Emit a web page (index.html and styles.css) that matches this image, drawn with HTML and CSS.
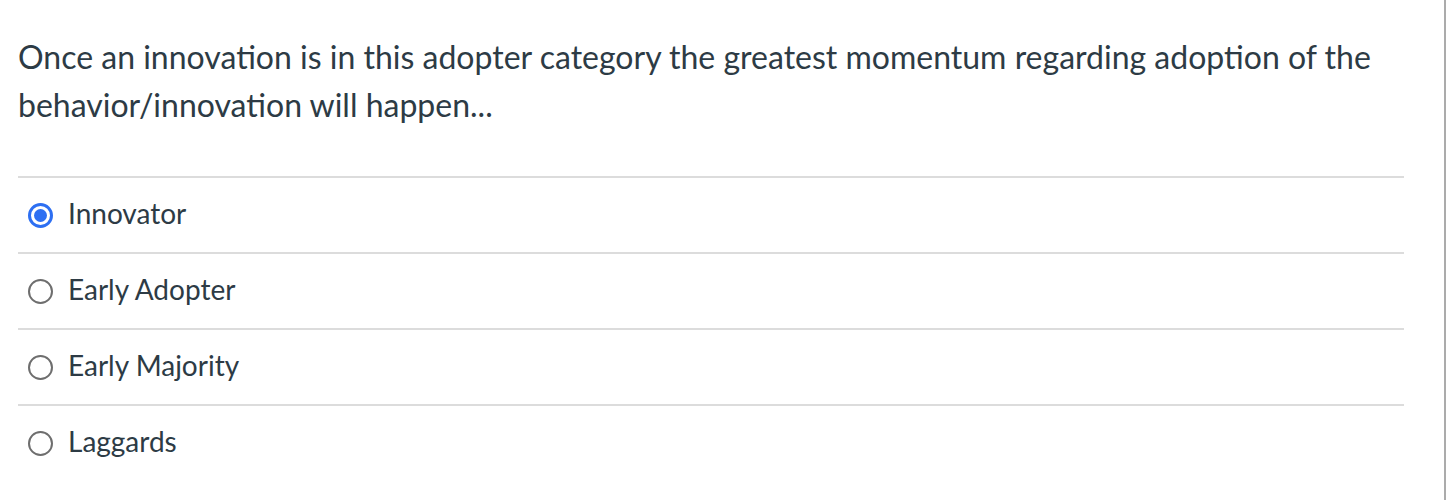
FILE: index.html
```html
<!DOCTYPE html>
<html>
<head>
<meta charset="utf-8">
<link rel="stylesheet" href="styles.css">
</head>
<body>
<div class="page">
  <div class="content">
    <div class="question">Once an innovation is in this adopter category the greatest momentum regarding adoption of the behavior/innovation will happen...</div>
    <div class="answers">
      <label class="answer"><span class="radio checked"></span><span class="label">Innovator</span></label>
      <label class="answer"><span class="radio"></span><span class="label">Early Adopter</span></label>
      <label class="answer"><span class="radio"></span><span class="label">Early Majority</span></label>
      <label class="answer"><span class="radio"></span><span class="label">Laggards</span></label>
    </div>
  </div>
  <div class="edge"></div>
</div>
</body>
</html>
```
FILE: styles.css
```css
html, body {
  margin: 0;
  padding: 0;
  background: #fff;
}
body {
  font-family: Lato, "Open Sans", sans-serif;
  color: #2d3b45;
}
.page {
  display: flex;
  height: 500px;
}
.content {
  flex: 1;
  padding: 33px 40px 0 18px;
}
.edge {
  width: 2px;
  background: #ababab;
}
.question {
  font-size: 32px;
  line-height: 48px;
  margin-bottom: 47px;
}
.answer {
  display: flex;
  align-items: center;
  height: 74px;
  border-top: 2px solid #dcdcdc;
  padding-left: 10px;
  gap: 15px;
}
.radio {
  box-sizing: border-box;
  width: 25px;
  height: 25px;
  border-radius: 50%;
  border: 2px solid #6e6e6e;
  background: #fff;
  position: relative;
}
.radio.checked {
  border: 3px solid #2d6ff2;
}
.radio.checked::after {
  content: "";
  position: absolute;
  left: 3px;
  top: 3px;
  width: 13px;
  height: 13px;
  border-radius: 50%;
  background: #2d6ff2;
}
.label {
  font-size: 28px;
  line-height: 32px;
  padding-bottom: 5px;
}
```
